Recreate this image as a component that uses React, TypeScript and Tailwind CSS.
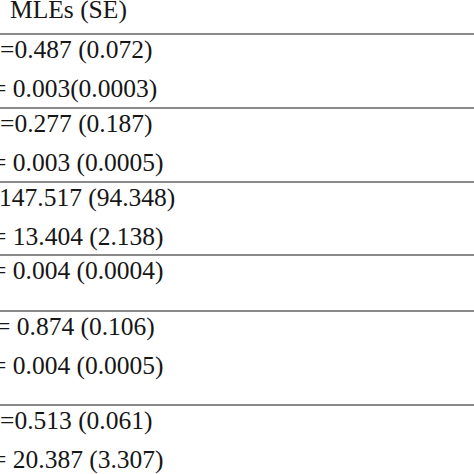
import React from "react";

type Line = { text: string; ml: number };
type Group = { h: number; lines: Line[] };

const groups: Group[] = [
  { h: 72, lines: [{ text: "=0.487 (0.072)", ml: 0 }, { text: "= 0.003(0.0003)", ml: -8 }] },
  { h: 72, lines: [{ text: "=0.277 (0.187)", ml: 0 }, { text: "= 0.003 (0.0005)", ml: -8 }] },
  { h: 71, lines: [{ text: "147.517 (94.348)", ml: -1 }, { text: "= 13.404 (2.138)", ml: -8 }] },
  { h: 54, lines: [{ text: "= 0.004 (0.0004)", ml: -8 }] },
  { h: 92, lines: [{ text: "= 0.874 (0.106)", ml: -4 }, { text: "= 0.004 (0.0005)", ml: -8 }] },
  { h: 68, lines: [{ text: "=0.513 (0.061)", ml: 0 }, { text: "= 20.387 (3.307)", ml: -8 }] },
];

const hClass: Record<number, string> = {
  72: "h-[72px]",
  71: "h-[71px]",
  54: "h-[54px]",
  92: "h-[92px]",
  68: "h-[68px]",
};

const mlClass: Record<number, string> = {
  0: "ml-0",
  [-1]: "ml-[-1px]",
  [-4]: "ml-[-4px]",
  [-8]: "ml-[-8px]",
};

export default function App() {
  return (
    <div
      className="w-[474px] h-[474px] overflow-hidden bg-white text-[#161616] text-[25.5px]"
      style={{ fontFamily: '"Liberation Serif", "Times New Roman", serif' }}
    >
      <div className="h-[33px] pl-[10px] leading-[20px] whitespace-nowrap">MLEs (SE)</div>
      {groups.map((g, i) => (
        <div key={i}>
          <div className="h-[2px] bg-[#8a8a8a]" />
          <div className={`${hClass[g.h]} flex flex-col gap-[9px]`}>
            {g.lines.map((l, j) => (
              <div key={j} className={`${mlClass[l.ml]} leading-[30px] whitespace-nowrap`}>
                {l.text}
              </div>
            ))}
          </div>
        </div>
      ))}
    </div>
  );
}
